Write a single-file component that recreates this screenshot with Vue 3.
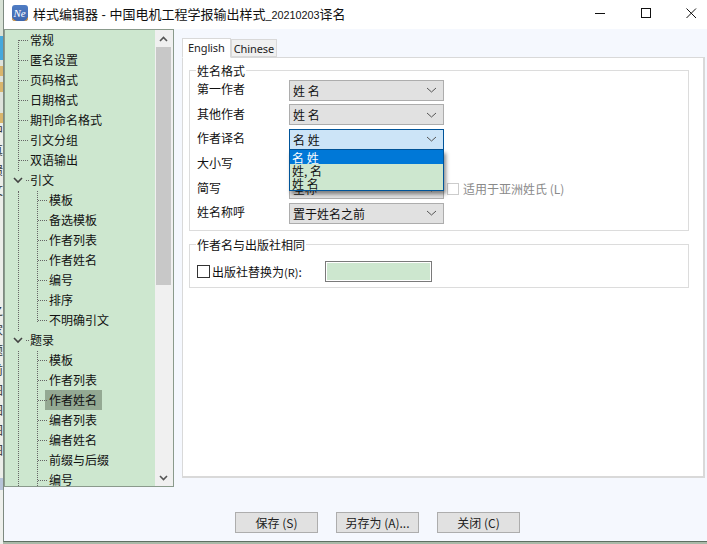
<script setup>
const tree = [
  { t: '常规', l: 0 }, { t: '匿名设置', l: 0 }, { t: '页码格式', l: 0 }, { t: '日期格式', l: 0 },
  { t: '期刊命名格式', l: 0 }, { t: '引文分组', l: 0 }, { t: '双语输出', l: 0 },
  { t: '引文', l: 0, open: true },
  { t: '模板', l: 1 }, { t: '备选模板', l: 1 }, { t: '作者列表', l: 1 }, { t: '作者姓名', l: 1 },
  { t: '编号', l: 1 }, { t: '排序', l: 1 }, { t: '不明确引文', l: 1 },
  { t: '题录', l: 0, open: true },
  { t: '模板', l: 1 }, { t: '作者列表', l: 1 }, { t: '作者姓名', l: 1, sel: true }, { t: '编者列表', l: 1 },
  { t: '编者姓名', l: 1 }, { t: '前缀与后缀', l: 1 }, { t: '编号', l: 1 }
]
const rows = [
  { label: '第一作者', value: '姓 名' },
  { label: '其他作者', value: '姓 名' },
  { label: '作者译名', value: '名 姓', active: true },
  { label: '大小写', value: '' },
  { label: '简写', value: '全称' },
  { label: '姓名称呼', value: '置于姓名之前' }
]
const behind = ['', '', '', '', '', '', '中', '真', '馈', '文', '', '', '', '', '', '之', '家', '题', '前', '图', '图', '图', '图']
</script>

<template>
  <div class="window">
    <div class="strip">
      <div class="strip-text">
        <span v-for="(c, i) in behind" :key="i">{{ c }}</span>
      </div>
    </div>
    <div class="column">
      <div class="main">
        <header class="titlebar">
          <svg class="logo" width="16" height="16" viewBox="0 0 16 16">
            <defs>
              <linearGradient id="neBlue" x1="0" y1="0" x2="0" y2="1">
                <stop offset="0" stop-color="#4f7cc4" />
                <stop offset="1" stop-color="#3f67ae" />
              </linearGradient>
            </defs>
            <rect width="16" height="16" rx="3" fill="url(#neBlue)" />
            <path d="M0 12 Q1 15 5 16 H3 Q0 16 0 13Z" fill="#f0a030" />
            <path d="M12 16 Q15 15 16 12 V13 Q16 16 13 16Z" fill="#f0a030" />
            <text x="1.500" y="12" class="logo-text">Ne</text>
          </svg>
          <span class="title">样式编辑器 - 中国电机工程学报输出样式<span class="title-num">_20210203</span>译名</span>
          <div class="controls">
            <svg width="11" height="11" viewBox="0 0 11 11"><path d="M0 5.500H10" stroke="#111" fill="none" /></svg>
            <svg width="11" height="11" viewBox="0 0 11 11"><rect x=".5" y=".5" width="9" height="9" stroke="#111" fill="none" /></svg>
            <svg width="11" height="11" viewBox="0 0 11 11"><path d="M.5 .5L10 10M10 .5L.5 10" stroke="#111" fill="none" /></svg>
          </div>
        </header>

        <div class="content">
          <aside class="tree">
            <div class="tree-list">
              <i class="vline root-a"></i>
              <i class="vline root-b"></i>
              <i class="vline root-c"></i>
              <i class="vline sub-a"></i>
              <i class="vline sub-b"></i>
              <div v-for="(n, i) in tree" :key="i" class="node" :class="{ child: n.l === 1 }">
                <svg v-if="n.open" class="twist" width="10" height="7" viewBox="0 0 10 7"><path d="M1 1L5 5L9 1" stroke="#444" stroke-width="1.600" fill="none" /></svg>
                <i class="dash" :class="{ short: n.open }"></i>
                <span class="label" :class="{ selected: n.sel }">{{ n.t }}</span>
              </div>
            </div>
            <div class="scrollbar">
              <div class="arrow up"><svg width="9" height="6" viewBox="0 0 9 6"><path d="M1 5L4.500 1.500L8 5" stroke="#555" stroke-width="1.600" fill="none" /></svg></div>
              <div class="thumb"></div>
              <div class="arrow down"><svg width="9" height="6" viewBox="0 0 9 6"><path d="M1 1L4.500 4.500L8 1" stroke="#555" stroke-width="1.600" fill="none" /></svg></div>
            </div>
          </aside>

          <section class="right">
            <div class="tabs">
              <div class="tab on">English</div>
              <div class="tab">Chinese</div>
            </div>
            <div class="page">
              <fieldset class="group first">
                <legend>姓名格式</legend>
                <div v-for="r in rows" :key="r.label" class="row">
                  <span class="row-label">{{ r.label }}</span>
                  <div class="select" :class="{ active: r.active }">
                    <span>{{ r.value }}</span>
                    <svg width="11" height="6" viewBox="0 0 11 6"><path d="M1 1L5.500 5L10 1" stroke="#555" fill="none" /></svg>
                  </div>
                  <div v-if="r.label === '简写'" class="asian">
                    <i class="box disabled"></i>
                    <span>适用于亚洲姓氏 <em>(L)</em></span>
                  </div>
                  <div v-if="r.active" class="dropdown">
                    <div class="opt sel">名 姓</div>
                    <div class="opt">姓, 名</div>
                    <div class="opt">姓 名</div>
                  </div>
                </div>
              </fieldset>

              <fieldset class="group second">
                <legend>作者名与出版社相同</legend>
                <div class="pub">
                  <i class="box"></i>
                  <span class="pub-label">出版社替换为<em>(R)</em>:</span>
                  <div class="pub-input"></div>
                </div>
              </fieldset>
            </div>
          </section>
        </div>

        <footer class="actions">
          <button>保存 (S)</button>
          <button>另存为 (A)...</button>
          <button>关闭 (C)</button>
        </footer>
      </div>
      <div class="under"></div>
    </div>
  </div>
</template>

<style>
html, body { margin: 0; padding: 0; overflow: hidden; }
</style>

<style scoped>
.window {
  width: 707px;
  height: 544px;
  display: flex;
  background: #f5f8fe;
  font-family: "Noto Sans CJK SC", "Liberation Sans", sans-serif;
  font-size: 12px;
  color: #111;
  overflow: hidden;
}
.strip {
  width: 3px;
  flex: none;
  overflow: hidden;
  background: linear-gradient(#d8e2d6 0 36px, #45a8dc 36px 60px, #dfe3dc 60px 66px, #d9b56c 66px 76px, #dfe3dc 76px 82px, #d9b56c 82px 92px, #dfe3dc 92px 113px, #d9b56c 113px 123px, #eceeea 123px 478px, #b7c4d8 478px 490px, #eef0ec 490px);
}
.strip-text { display: flex; flex-direction: column; margin-left: -9px; width: 12px; color: #333; font-size: 12px; }
.strip-text span { display: block; height: 20px; line-height: 20px; }
.column { flex: 1; min-width: 0; display: flex; flex-direction: column; }
.main {
  flex: none;
  height: 542px;
  display: flex;
  flex-direction: column;
  border-left: 1px solid #7d8a80;
  border-bottom: 1px solid #5f6f62;
  box-sizing: border-box;
}
.under { flex: 1; background: #a9b9a8; }
.titlebar {
  height: 29px;
  flex: none;
  background: #fff;
  display: flex;
  align-items: center;
  padding-left: 8px;
  padding-bottom: 3px;
  box-sizing: border-box;
}
.logo { flex: none; margin-right: 5px; }
.logo-text { font: italic 400 11px "Liberation Serif", serif; fill: #fff; }
.title { font: 13px "Liberation Sans", "Noto Sans CJK SC", sans-serif; white-space: nowrap; }
.title-num { font-size: 10.800px; }
.controls { margin-left: auto; display: flex; gap: 34.500px; padding-right: 10px; }
.controls svg { display: block; }
.content { display: flex; flex: none; height: 458px; }
.tree {
  width: 170px;
  height: 458px;
  flex: none;
  box-sizing: border-box;
  border: 1px solid #8a9a8c;
  background: #cde7cf;
  display: flex;
  overflow: hidden;
}
.tree-list { position: relative; flex: 1; }
.node { height: 20px; display: flex; align-items: center; position: relative; padding-left: 25px; }
.node.child { padding-left: 44px; }
.label { line-height: 20px; white-space: nowrap; font-size: 12px; }
.label.selected { background: #94a993; padding: 0 5px 0 4px; margin-left: -4px; }
.dash { position: absolute; width: 9px; height: 0; border-top: 1px dotted #666; left: 14px; top: 10px; }
.node.child .dash { left: 33px; }
.dash.short { left: 21px; width: 3px; }
.twist { position: absolute; left: 8px; top: 7px; }
.vline { position: absolute; width: 0; border-left: 1px dotted #666; }
.root-a { left: 13px; top: 10px; height: 131px; }
.root-b { left: 13px; top: 161px; height: 140px; }
.root-c { left: 13px; top: 321px; height: 135px; }
.sub-a { left: 32px; top: 161px; height: 131px; }
.sub-b { left: 32px; top: 321px; height: 135px; }
.scrollbar { width: 18px; background: #f0f0f0; display: flex; flex-direction: column; flex: none; }
.arrow { height: 17px; display: flex; align-items: center; justify-content: center; flex: none; padding-right: 2px; }
.thumb { height: 238px; width: 15px; margin-left: 1px; background: #c8c8c8; }
.arrow.down { margin-top: auto; }
.right { margin-left: 8px; flex: none; width: 523px; display: flex; flex-direction: column; padding-top: 7px; box-sizing: border-box; }
.tabs { display: flex; height: 21px; flex: none; align-items: flex-end; position: relative; z-index: 1; }
.tab {
  height: 18px;
  box-sizing: border-box;
  padding: 0 2px;
  border: 1px solid #d9d9d9;
  background: #f0f0f0;
  font: 11px/17px "Noto Sans", sans-serif;
  letter-spacing: -.1px;
  color: #222;
}
.tab.on { height: 20px; padding: 0 5px; line-height: 17px; background: #fff; border-bottom-color: #fff; margin-bottom: -1px; }
.page {
  height: 421px;
  box-sizing: border-box;
  background: #fff;
  border: 1px solid #d9d9d9;
  border-right-width: 2px;
  border-bottom-width: 2px;
  padding: 6px 14px 0 6px;
}
fieldset { margin: 0; padding: 0; border: 1px solid #dcdcdc; min-width: 0; }
legend { padding: 0 1px; font-size: 12px; line-height: 13px; }
.group.first { height: 167px; padding: 1px 0 0 7px; box-sizing: border-box; }
.group.first legend { margin-left: -1px; }
.row { height: 24.600px; display: flex; align-items: center; position: relative; }
.row-label { width: 92px; line-height: 20px; flex: none; margin-top: -2px; }
.select {
  width: 155px;
  height: 21px;
  box-sizing: border-box;
  border: 1px solid #adadad;
  background: #e1e1e1;
  display: flex;
  align-items: center;
  justify-content: space-between;
  padding: 0 6px 0 3px;
  font-size: 12px;
}
.select.active { background: #cce4f7; border-color: #005499; }
.asian { display: flex; align-items: center; gap: 4px; color: #8a8a8a; margin-left: 3px; }
.asian em { font-style: normal; }
.box { display: block; width: 12px; height: 12px; box-sizing: border-box; border: 1px solid #333; background: #fff; flex: none; }
.box.disabled { border-color: #ccc; }
.dropdown {
  position: absolute;
  left: 92px;
  top: 23px;
  width: 155px;
  height: 41px;
  box-sizing: border-box;
  border: 1px solid #005499;
  border-top: 0;
  background: #cde7cf;
  box-shadow: 2px 3px 4px rgba(0,0,0,.45);
  z-index: 2;
  overflow: hidden;
}
.opt { height: 13px; line-height: 13px; padding-left: 2px; font-size: 12px; }
.opt.sel { height: 14px; line-height: 15px; background: #0078d7; color: #fff; }
.group.second { height: 50px; margin-top: 7px; padding: 10px 0 0 7px; box-sizing: border-box; }
.group.second legend { margin-left: -1px; }
.pub { display: flex; align-items: center; height: 21px; }
.pub .box { width: 13px; height: 13px; margin-right: 2px; }
.pub-label { width: 113px; flex: none; }
.pub-label em { font-style: normal; font-size: 11px; }
.pub-input { width: 107px; height: 21px; box-sizing: border-box; border: 1px solid #7a7a7a; padding: 1px; background: #cde7cf content-box; }
.actions { display: flex; gap: 18px; padding: 25px 0 0 231px; }
button {
  width: 83px;
  height: 21px;
  padding: 0;
  box-sizing: border-box;
  border: 1px solid #adadad;
  background: #e1e1e1;
  font: inherit;
  font-size: 12px;
  color: #222;
  line-height: 17px;
}
</style>
